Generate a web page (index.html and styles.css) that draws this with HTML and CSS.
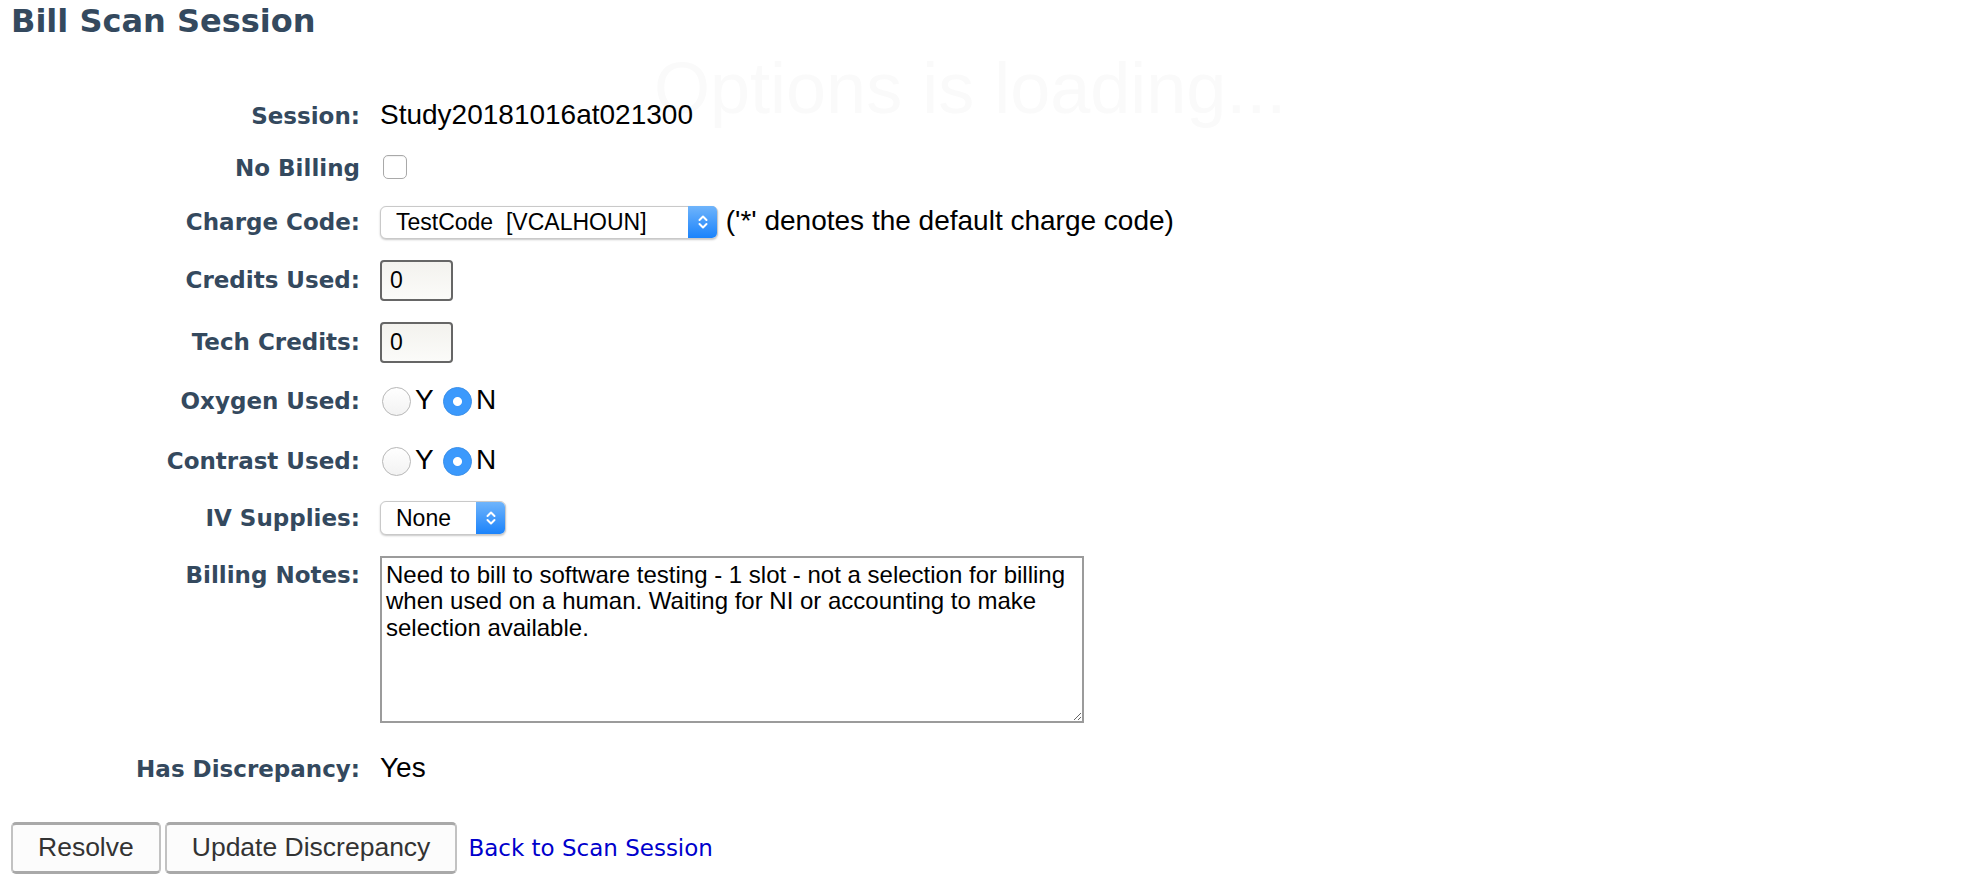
FILE: index.html
```html
<!DOCTYPE html>
<html lang="en">
<head>
    <meta charset="UTF-8">
    <meta name="viewport" content="width=device-width, initial-scale=1.0">
    <title>Bill Scan Session</title>
    <link rel="stylesheet" href="styles.css">
</head>
<body>

<div class="loading-ghost">Options is loading...</div>

<h2>Bill Scan Session</h2>

<table class="bill-form">
    <tr class="gap-sm">
        <td class="label">Session:</td>
        <td>Study20181016at021300</td>
    </tr>
    <tr class="gap-md">
        <td class="label">No Billing</td>
        <td><input type="checkbox" class="check" id="no_billing"></td>
    </tr>
    <tr class="gap-md">
        <td class="label">Charge Code:</td>
        <td>
            <span class="select-wrap">
                <select class="select charge-select" id="charge_code">
                    <option>TestCode&nbsp;&nbsp;[VCALHOUN]</option>
                </select>
                <span class="select-arrow">
                    <svg width="12" height="22" viewBox="0 0 12 22"><polyline points="2.5,9 6,5.5 9.5,9"/><polyline points="2.5,13 6,16.5 9.5,13"/></svg>
                </span>
            </span>
            ('*' denotes the default charge code)
        </td>
    </tr>
    <tr class="gap-md">
        <td class="label">Credits Used:</td>
        <td><input type="text" class="num" id="credits_used" value="0"></td>
    </tr>
    <tr class="gap-md">
        <td class="label">Tech Credits:</td>
        <td><input type="text" class="num" id="tech_credits" value="0"></td>
    </tr>
    <tr class="gap-xl">
        <td class="label">Oxygen Used:</td>
        <td><input type="radio" class="radio" name="oxygen">Y <input type="radio" class="radio" name="oxygen" checked>N</td>
    </tr>
    <tr class="gap-lg">
        <td class="label">Contrast Used:</td>
        <td><input type="radio" class="radio" name="contrast">Y <input type="radio" class="radio" name="contrast" checked>N</td>
    </tr>
    <tr class="gap-md">
        <td class="label">IV Supplies:</td>
        <td>
            <span class="select-wrap">
                <select class="select iv-select" id="iv_supplies">
                    <option>None</option>
                </select>
                <span class="select-arrow">
                    <svg width="12" height="22" viewBox="0 0 12 22"><polyline points="2.5,9 6,5.5 9.5,9"/><polyline points="2.5,13 6,16.5 9.5,13"/></svg>
                </span>
            </span>
        </td>
    </tr>
    <tr class="gap-notes notes-row">
        <td class="label">Billing Notes:</td>
        <td><textarea class="notes" id="billing_notes">Need to bill to software testing - 1 slot - not a selection for billing when used on a human. Waiting for NI or accounting to make selection available.</textarea></td>
    </tr>
    <tr>
        <td class="label">Has Discrepancy:</td>
        <td>Yes</td>
    </tr>
</table>

<div class="actions">
    <button class="btn">Resolve</button>
    <button class="btn">Update Discrepancy</button>
    <a href="#" class="back-link">Back to Scan Session</a>
</div>

</body>
</html>
```

FILE: styles.css
```css
body {
    margin: 0;
    padding: 0 11px;
    background: #fff;
    color: #000;
    font-family: 'Liberation Sans', Arial, sans-serif;
    font-size: 28px;
}
h2 {
    margin: 1px 0 0 0;
    font-family: 'DejaVu Sans', Verdana, sans-serif;
    font-size: 32px;
    line-height: 40px;
    color: #34495e;
}
.loading-ghost {
    position: absolute;
    z-index: -1;
    left: 654px;
    top: 52px;
    font-size: 72px;
    line-height: 72px;
    color: #fafafa;
    pointer-events: none;
}
.bill-form {
    margin-top: 58px;
    border-collapse: collapse;
}
.bill-form td {
    padding: 0 0 22px 0;
    vertical-align: baseline;
    line-height: 32px;
    white-space: nowrap;
}
.bill-form tr.gap-sm td { padding-bottom: 19px; }
.bill-form tr.gap-md td { padding-bottom: 21px; }
.bill-form tr.gap-lg td { padding-bottom: 24px; }
.bill-form tr.gap-xl td { padding-bottom: 27px; }
.bill-form tr.gap-notes td { padding-bottom: 29px; }
.bill-form tr:last-child td { padding-bottom: 0; }
.bill-form .notes-row td { vertical-align: top; }
.bill-form .notes-row td.label { padding-top: 3px; }
.bill-form td.label {
    width: 369px;
    box-sizing: border-box;
    padding-right: 20px;
    text-align: right;
    font-family: 'DejaVu Sans', Verdana, sans-serif;
    font-weight: bold;
    font-size: 23px;
    color: #34495e;
}

/* form controls */
.check {
    appearance: none;
    -webkit-appearance: none;
    width: 24px;
    height: 24px;
    margin: 0 0 0 3px;
    border: 1px solid #a9a9a9;
    border-radius: 5px;
    background: #fff;
    box-shadow: inset 0 1px 1px rgba(0, 0, 0, 0.06);
    vertical-align: -3px;
}
.radio {
    appearance: none;
    -webkit-appearance: none;
    width: 29px;
    height: 29px;
    margin: 0 4px 0 2px;
    border: 1px solid #b8b8b8;
    border-radius: 50%;
    background: linear-gradient(#fff, #f2f2f2);
    vertical-align: -7px;
}
.radio:checked {
    border-color: #3a8fe9;
    background: radial-gradient(circle, #fff 0 4px, #3b99fc 5px);
}
.select-wrap {
    position: relative;
    display: inline-block;
}
.select {
    appearance: none;
    -webkit-appearance: none;
    margin: 0;
    padding: 0 30px 0 15px;
    border: 1px solid #c9c9c9;
    border-radius: 6px;
    background: #fff;
    box-shadow: 0 1px 2px rgba(0, 0, 0, 0.22);
    font-family: 'Liberation Sans', Arial, sans-serif;
    font-size: 23px;
    color: #000;
}
.charge-select {
    width: 338px;
    height: 33px;
}
.iv-select {
    width: 126px;
    height: 34px;
}
.select-arrow {
    position: absolute;
    top: 1px;
    right: 1px;
    bottom: 1px;
    width: 29px;
    border-radius: 0 5px 5px 0;
    background: linear-gradient(#6fb4fb, #1b83fb);
    display: flex;
    align-items: center;
    justify-content: center;
    pointer-events: none;
}
.select-arrow polyline {
    fill: none;
    stroke: #fff;
    stroke-width: 2;
    stroke-linecap: round;
    stroke-linejoin: round;
}
.num {
    width: 73px;
    height: 41px;
    box-sizing: border-box;
    margin: 0;
    padding: 0 8px;
    border: 2px solid #666;
    border-radius: 4px;
    background: linear-gradient(#f3f2ee, #fbfbf9);
    font-family: 'Liberation Sans', Arial, sans-serif;
    font-size: 23px;
    color: #000;
}
.notes {
    display: block;
    width: 704px;
    height: 167px;
    box-sizing: border-box;
    margin: 0;
    padding: 4px 4px 2px;
    border: 2px solid #9b9b9b;
    font-family: 'Liberation Sans', Arial, sans-serif;
    font-size: 24px;
    line-height: 26.5px;
    color: #000;
    white-space: normal;
}

/* buttons */
.actions {
    display: flex;
    align-items: baseline;
    gap: 4px;
    margin-top: 37px;
}
.btn {
    height: 52px;
    padding: 0 25px;
    border: 2px solid #c2c2c2;
    border-top: 3px solid #a9a9a9;
    border-bottom: 3px solid #a9a9a9;
    border-radius: 5px;
    background: #fcfcfc;
    font-family: 'Liberation Sans', Arial, sans-serif;
    font-size: 26.5px;
    color: #333;
    cursor: pointer;
}
.back-link {
    margin-left: 7px;
    font-family: 'DejaVu Sans', Verdana, sans-serif;
    font-size: 23px;
    color: #0000cc;
    text-decoration: none;
}
```
